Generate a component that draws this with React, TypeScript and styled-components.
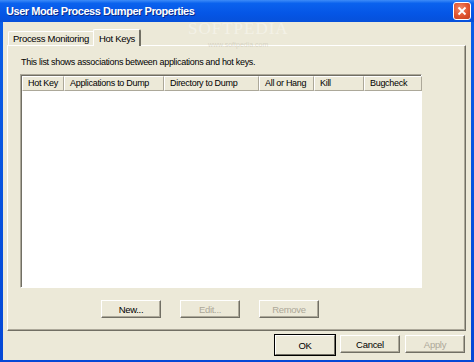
import React from 'react'
import styled, { createGlobalStyle } from 'styled-components'

const GlobalStyle = createGlobalStyle`
  html, body {
    margin: 0;
    padding: 0;
    background: #0a246a;
  }
  body {
    font-family: "Liberation Sans", Arial, sans-serif;
  }
`

const face = '#ece9d8'
const shadow = '#aca899'
const darkShadow = '#716f64'

const Window = styled.div`
  width: 474px;
  height: 362px;
  box-sizing: border-box;
  display: flex;
  flex-direction: column;
  background: linear-gradient(180deg, #0a5fe8 0%, #0548d6 100%);
  padding: 0 3px 3px 3px;
  overflow: hidden;
`

const TitleBar = styled.div`
  height: 22px;
  flex: none;
  display: flex;
  align-items: center;
  justify-content: space-between;
  padding: 0 2px 0 3px;
  margin: 0 -3px;
  background: linear-gradient(180deg, #3d8cf8 0%, #0a62ee 15%, #0556e6 60%, #0650da 100%);
`

const Title = styled.div`
  color: #fff;
  font-weight: bold;
  font-size: 11px;
  letter-spacing: -0.45px;
  text-shadow: 1px 1px 0 #0a2a8a;
  padding-left: 3px;
`

const CloseButton = styled.div`
  width: 16px;
  height: 16px;
  border-radius: 3px;
  border: 1px solid #fff;
  background: radial-gradient(circle at 40% 35%, #f08a6c 0%, #e0532e 55%, #c23c1c 100%);
  display: flex;
  align-items: center;
  justify-content: center;
  margin-right: 1px;
`

const Client = styled.div`
  flex: 1;
  background: ${face};
  display: flex;
  flex-direction: column;
  padding: 7px 5px 5px 4px;
  position: relative;
`

const Watermark = styled.div`
  position: absolute;
  left: 185px;
  top: -3px;
  font-family: "Liberation Serif", serif;
  font-size: 17px;
  letter-spacing: 1px;
  color: rgba(255, 255, 255, 0.4);
`

const WatermarkSmall = styled.div`
  position: absolute;
  left: 205px;
  top: 19px;
  font-size: 7px;
  color: rgba(170, 165, 150, 0.35);
`

const TabStrip = styled.div`
  display: flex;
  align-items: flex-end;
  height: 16px;
  padding-left: 1px;
  position: relative;
  z-index: 1;
`

const Tab = styled.div<{ $active?: boolean }>`
  height: ${p => (p.$active ? 17 : 14)}px;
  margin-bottom: ${p => (p.$active ? -1 : 0)}px;
  padding: 0 4px 0 ${p => (p.$active ? 5 : 4)}px;
  margin-left: ${p => (p.$active ? -2 : 0)}px;
  box-sizing: border-box;
  background: ${face};
  border-top: 1px solid #fff;
  border-left: 1px solid #fff;
  border-right: 2px solid ${p => (p.$active ? darkShadow : shadow)};
  border-top-left-radius: 2px;
  border-top-right-radius: 2px;
  font-size: 9.5px;
  letter-spacing: -0.3px;
  color: #000;
  display: flex;
  align-items: center;
  white-space: nowrap;
`

const Panel = styled.div`
  height: 286px;
  box-sizing: border-box;
  border-top: 1px solid #fff;
  border-left: 1px solid #fff;
  border-right: 1px solid ${darkShadow};
  border-bottom: 1px solid ${darkShadow};
  box-shadow: inset -1px -1px 0 ${shadow};
  display: flex;
  flex-direction: column;
  padding: 10px 0 0 12px;
`

const Hint = styled.div`
  font-size: 9px;
  letter-spacing: -0.3px;
  color: #000;
  height: 18px;
  line-height: 13px;
  padding-left: 1px;
`

const List = styled.div`
  width: 402px;
  height: 214px;
  box-sizing: border-box;
  background: #fff;
  border-top: 1px solid ${shadow};
  border-left: 1px solid ${shadow};
  border-right: 1px solid #fff;
  border-bottom: 1px solid #fff;
  box-shadow: inset 1px 1px 0 ${darkShadow};
  padding: 1px 0 0 1px;
`

const HeaderRow = styled.div`
  display: flex;
  height: 15px;
`

const HeaderCell = styled.div<{ $w: number }>`
  width: ${p => p.$w}px;
  flex: none;
  box-sizing: border-box;
  background: ${face};
  border-top: 1px solid #fff;
  border-left: 1px solid #fff;
  border-right: 1px solid ${shadow};
  border-bottom: 1px solid ${shadow};
  font-size: 9px;
  letter-spacing: -0.3px;
  padding-left: 5px;
  line-height: 13px;
  white-space: nowrap;
  overflow: hidden;
`

const ButtonRow = styled.div`
  display: flex;
  gap: 19px;
  padding: 12px 0 0 81px;
`

const Button = styled.div<{ $disabled?: boolean; $default?: boolean }>`
  width: 60px;
  height: ${p => (p.$default ? 20 : 18)}px;
  box-sizing: border-box;
  background: ${face};
  border-top: 1px solid #fff;
  border-left: 1px solid #fff;
  border-right: 1px solid ${darkShadow};
  border-bottom: 1px solid ${darkShadow};
  box-shadow: ${p => (p.$default ? '0 0 0 1px #000' : 'inset -1px -1px 0 ' + shadow)};
  font-size: 9.5px;
  letter-spacing: -0.3px;
  color: ${p => (p.$disabled ? '#aca899' : '#000')};
  display: flex;
  align-items: center;
  justify-content: center;
`

const Footer = styled.div`
  display: flex;
  justify-content: flex-end;
  gap: 5px;
  padding: 4px 1px 0 0;
`

const columns: [string, number][] = [
  ['Hot Key', 42],
  ['Applications to Dump', 100],
  ['Directory to Dump', 95],
  ['All or Hang', 55],
  ['Kill', 50],
  ['Bugcheck', 58]
]

export default function App() {
  return (
    <>
      <GlobalStyle />
      <Window>
        <TitleBar>
          <Title>User Mode Process Dumper Properties</Title>
          <CloseButton>
            <svg width="10" height="10" viewBox="0 0 10 10">
              <path d="M1.5 1.5 L8.5 8.5 M8.5 1.5 L1.5 8.5" stroke="#fff" strokeWidth="1.8" />
            </svg>
          </CloseButton>
        </TitleBar>
        <Client>
          <Watermark>SOFTPEDIA</Watermark>
          <WatermarkSmall>www.softpedia.com</WatermarkSmall>
          <TabStrip>
            <Tab>Process Monitoring</Tab>
            <Tab $active>Hot Keys</Tab>
          </TabStrip>
          <Panel>
            <Hint>This list shows associations between applications and hot keys.</Hint>
            <List>
              <HeaderRow>
                {columns.map(([label, w]) => (
                  <HeaderCell key={label} $w={w}>{label}</HeaderCell>
                ))}
              </HeaderRow>
            </List>
            <ButtonRow>
              <Button>New...</Button>
              <Button $disabled>Edit...</Button>
              <Button $disabled>Remove</Button>
            </ButtonRow>
          </Panel>
          <Footer>
            <Button $default>OK</Button>
            <Button>Cancel</Button>
            <Button $disabled>Apply</Button>
          </Footer>
        </Client>
      </Window>
    </>
  )
}
